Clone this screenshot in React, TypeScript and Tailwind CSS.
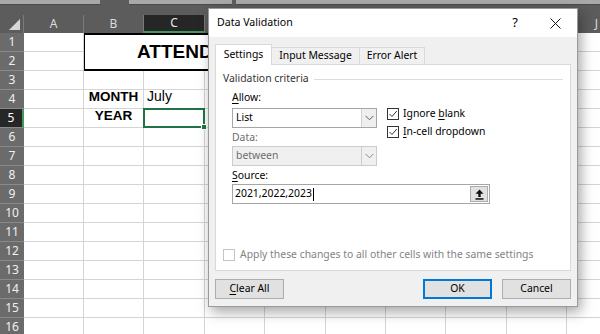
import React from "react";

const COLS = ["A", "B", "C", "D", "E", "F", "G", "H", "I", "J"];
const ROW_COUNT = 16;

// cells hidden under the merged title block B1:F2
const MERGED = new Set(["B1", "C1", "D1", "E1", "F1", "B2", "C2", "D2", "E2", "F2"]);

const Underline = ({ children }: { children: React.ReactNode }) => (
  <span className="underline underline-offset-2">{children}</span>
);

const Chevron = ({ color = "#606060" }: { color?: string }) => (
  <svg width="9" height="6" viewBox="0 0 9 6" fill="none">
    <path d="M0.5 0.8 L4.5 4.8 L8.5 0.8" stroke={color} strokeWidth="1" />
  </svg>
);

const CheckBox = ({ checked, disabled }: { checked?: boolean; disabled?: boolean }) => (
  <div
    className={
      "flex h-[12px] w-[12px] shrink-0 items-center justify-center border bg-white " +
      (disabled ? "border-[#c4c4c4]" : "border-[#333333]")
    }
  >
    {checked && (
      <svg width="10" height="10" viewBox="0 0 10 10" fill="none">
        <path d="M1.5 5 L4 7.5 L8.8 2" stroke="#333333" strokeWidth="1" />
      </svg>
    )}
  </div>
);

const Combo = ({ value, disabled }: { value: string; disabled?: boolean }) => (
  <div
    className={
      "flex h-[20px] w-[145px] items-stretch border " +
      (disabled ? "border-[#cccccc] bg-[#f0f0f0] text-[#6d6d6d]" : "border-[#a6a6a6] bg-white text-black")
    }
  >
    <div className="flex flex-1 items-center pl-[3px]">{value}</div>
    <div
      className={
        "flex w-[15px] items-center justify-center border-l " +
        (disabled ? "border-[#cccccc] bg-[#f0f0f0]" : "border-[#d0d0d0] bg-[#efefef]")
      }
    >
      <Chevron color={disabled ? "#8a8a8a" : "#606060"} />
    </div>
  </div>
);

const DialogButton = ({ children, primary }: { children: React.ReactNode; primary?: boolean }) => (
  <div
    className={
      "flex h-[20px] w-[69px] items-center justify-center bg-[#e1e1e1] " +
      (primary ? "border-2 border-[#0078d7]" : "border border-[#adadad]")
    }
  >
    {children}
  </div>
);

const DataValidationDialog = () => (
  <div className="absolute left-[208px] top-[8px] flex h-[299px] w-[370px] flex-col border border-[#9a9a9a] bg-[#f0f0f0] font-['Noto_Sans',sans-serif] text-[10.4px] text-black shadow-[3px_5px_12px_rgba(0,0,0,0.35)]">
    <div className="flex h-[28px] items-center bg-white pl-[8px]">
      <span className="text-[10.6px]">Data Validation</span>
      <span className="ml-auto mr-[32px] text-[13px]">?</span>
      <svg className="mr-[16px]" width="11" height="11" viewBox="0 0 11 11" fill="none">
        <path d="M0.5 0.5 L10.5 10.5 M10.5 0.5 L0.5 10.5" stroke="#111" strokeWidth="1" />
      </svg>
    </div>

    <div className="flex flex-1 flex-col px-[6px] pt-[7px]">
      <div className="flex h-[20px] items-end">
        <div className="relative z-10 -mb-px flex h-[21px] w-[57px] items-center justify-center border border-b-0 border-[#d9d9d9] bg-white">
          Settings
        </div>
        <div className="flex h-[17px] w-[88px] items-center justify-center border border-l-0 border-b-0 border-[#d9d9d9]">
          Input Message
        </div>
        <div className="flex h-[17px] w-[65px] items-center justify-center border border-l-0 border-b-0 border-[#d9d9d9]">
          Error Alert
        </div>
      </div>

      <div className="flex h-[207px] w-[356px] flex-col border border-[#d9d9d9] bg-white">
        <div className="mx-[7px] mt-[7px] flex h-[14px] items-center gap-[5px] text-[#333333]">
          <span>Validation criteria</span>
          <div className="h-px flex-1 bg-[#dcdcdc]" />
        </div>

        <div className="ml-[16px] mt-[5px] flex gap-[10px]">
          <div className="flex w-[145px] flex-col">
            <div className="flex h-[14px] items-center">
              <Underline>A</Underline>llow:
            </div>
            <div className="mt-[3px]">
              <Combo value="List" />
            </div>
            <div className="mt-[3px] flex h-[14px] items-center text-[#6d6d6d]">Data:</div>
            <div className="mt-px">
              <Combo value="between" disabled />
            </div>
          </div>
          <div className="flex flex-col gap-[6px] pt-[17px]">
            <div className="flex h-[12px] items-center gap-[4px]">
              <CheckBox checked />
              <span>
                Ignore <Underline>b</Underline>lank
              </span>
            </div>
            <div className="flex h-[12px] items-center gap-[4px]">
              <CheckBox checked />
              <span>
                <Underline>I</Underline>n-cell dropdown
              </span>
            </div>
          </div>
        </div>

        <div className="ml-[16px] mt-[3px] flex h-[14px] items-center">
          <Underline>S</Underline>ource:
        </div>
        <div className="ml-[16px] mt-px flex h-[20px] w-[258px] items-stretch border border-[#a6a6a6] bg-white">
          <div className="flex flex-1 items-center pl-[2px]">
            2021,2022,2023
            <span className="ml-px h-[13px] w-px bg-black" />
          </div>
          <div className="my-px mr-px flex w-[18px] items-center justify-center border border-[#adadad] bg-[#e1e1e1]">
            <svg width="9" height="11" viewBox="0 0 9 11" fill="none">
              <path d="M4.5 0.5 L8.5 4.8 L5.7 4.8 L5.7 8 L3.3 8 L3.3 4.8 L0.5 4.8 Z" fill="#111" />
              <rect x="0.5" y="9.2" width="8" height="1.5" fill="#111" />
            </svg>
          </div>
        </div>

        <div className="ml-[7px] mt-[44px] flex h-[14px] items-center gap-[5px] text-[#838383]">
          <CheckBox disabled />
          <span>Apply these changes to all other cells with the same settings</span>
        </div>
      </div>

      <div className="mt-[8px] flex items-center">
        <DialogButton>
          <span>
            <Underline>C</Underline>lear All
          </span>
        </DialogButton>
        <div className="ml-auto flex gap-[10px]">
          <DialogButton primary>OK</DialogButton>
          <DialogButton>Cancel</DialogButton>
        </div>
      </div>
    </div>
  </div>
);

const Cell = ({ id }: { id: string }) => {
  if (id === "B4")
    return (
      <div className="flex items-end justify-center border-b border-r border-[#d4d4d4] bg-white pb-px text-[13.5px] font-bold">
        MONTH
      </div>
    );
  if (id === "B5")
    return (
      <div className="flex items-end justify-center border-b border-r border-[#d4d4d4] bg-white pb-px text-[13.5px] font-bold">
        YEAR
      </div>
    );
  if (id === "C4")
    return (
      <div className="flex items-end border-b border-r border-[#d4d4d4] bg-white pb-px pl-[3px] text-[14px]">
        July
      </div>
    );
  if (id === "C5")
    return (
      <div className="relative -ml-px -mt-px border-2 border-[#217346] bg-white">
        <div className="absolute -bottom-[4px] -right-[4px] h-[6px] w-[6px] border border-white bg-[#217346]" />
      </div>
    );
  return <div className="border-b border-r border-[#d4d4d4] bg-white" />;
};

export default function App() {
  const rows = Array.from({ length: ROW_COUNT }, (_, i) => i + 1);

  return (
    <div className="relative h-[334px] w-[600px] overflow-hidden bg-[#5c5c5c] font-['Liberation_Sans',sans-serif]">
      <div className="flex h-[5px]">
        <div className="w-[100px] border-b border-[#4a4a4a] bg-[#a9a9a9]" />
        <div className="ml-[29px] w-[103px] border-b border-[#4a4a4a] bg-[#a9a9a9]" />
        <div className="ml-[4px] flex-1 border-b border-[#4a4a4a] bg-[#a9a9a9]" />
      </div>
      <div className="h-[10px]" />

      <div className="grid grid-cols-[24px_60px_60px_61px_60px_61px_60px_60px_61px_60px_60px] grid-rows-[18px_repeat(16,19px)]">
        <div className="relative border-r border-[#7a7a7a] bg-[#5c5c5c]">
          <svg className="absolute bottom-[3px] right-[3px]" width="11" height="11" viewBox="0 0 11 11">
            <path d="M11 0 L11 11 L0 11 Z" fill="#d8d8d8" />
          </svg>
        </div>
        {COLS.map((c) => (
          <div
            key={c}
            className={
              "flex items-center justify-center font-['Noto_Sans',sans-serif] text-[12px] " +
              (c === "C"
                ? "border-b-2 border-r border-b-[#3f9a5c] border-r-[#7a7a7a] bg-[#262626] text-[#e8e8e8]"
                : "border-r border-[#7a7a7a] text-[#dcdcdc]")
            }
          >
            {c}
          </div>
        ))}

        <div className="col-start-3 col-end-8 row-start-2 row-end-4 -ml-px flex items-center border-2 border-black bg-white pl-[52px] text-[19px] font-bold text-black">
          ATTENDANCE SHEET
        </div>

        {rows.map((r) => (
          <React.Fragment key={r}>
            <div
              className={
                "flex items-center justify-center border-b font-['Noto_Sans',sans-serif] text-[12px] " +
                (r === 5
                  ? "border-r-2 border-b-[#8a8a8a] border-r-[#3f9a5c] bg-[#262626] text-white"
                  : "border-[#8a8a8a] bg-[#6b6b6b] text-[#f0f0f0]")
              }
            >
              {r}
            </div>
            {COLS.filter((c) => !MERGED.has(`${c}${r}`)).map((c) => (
              <Cell key={c} id={`${c}${r}`} />
            ))}
          </React.Fragment>
        ))}
      </div>

      <DataValidationDialog />
    </div>
  );
}
